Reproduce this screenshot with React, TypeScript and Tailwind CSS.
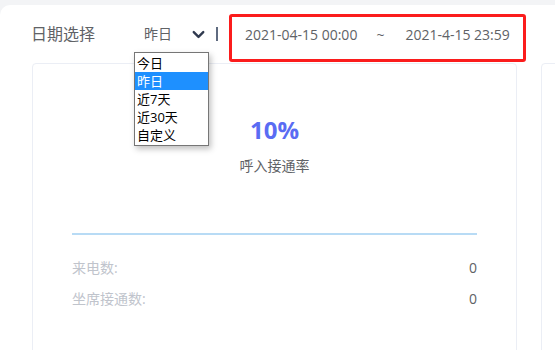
import { ChevronDown } from "lucide-react";

const font = { fontFamily: '"Open Sans", "Noto Sans CJK SC", sans-serif' };

const options = ["今日", "昨日", "近7天", "近30天", "自定义"];

const StatCard = () => (
  <div className="w-[485px] h-[320px] shrink-0 border border-[#ebeef5] rounded-[4px] bg-white px-[39px] pt-[50px]">
    <div className="text-center text-[24px] leading-[32px] font-bold text-[#5a6cf3]">10%</div>
    <div className="mt-[10px] text-center text-[14px] leading-[20px] text-[#606266]">呼入接通率</div>
    <div className="mt-[57px] h-[2px] bg-[#b8dbf5]" />
    <div className="mt-[17px]">
      <div className="flex items-center justify-between h-[31px] text-[14px]">
        <span className="text-[#c0c4cc]">来电数:</span>
        <span className="text-[#606266]">0</span>
      </div>
      <div className="flex items-center justify-between h-[31px] text-[14px]">
        <span className="text-[#c0c4cc]">坐席接通数:</span>
        <span className="text-[#606266]">0</span>
      </div>
    </div>
  </div>
);

export default function App() {
  return (
    <div className="w-[555px] h-[350px] overflow-hidden bg-[#f3f4f6] pt-[5px]" style={font}>
      <div className="relative h-full bg-white rounded-tl-[10px]">
        {/* Header */}
        <div className="flex items-start pt-[9px] pl-[31px]">
          <span className="mt-[8px] text-[16px] leading-[24px] text-[#606266] w-[113px]">日期选择</span>
          <div className="mt-[10px] flex items-center h-[20px]">
            <span className="text-[14px] leading-[20px] text-[#606266] w-[45px]">昨日</span>
            <ChevronDown className="w-[19px] h-[19px] text-[#303a4f]" strokeWidth={3} />
          </div>
          <span className="mt-[13px] ml-[8px] w-[2px] h-[14px] bg-[#5f6b80]" />
          <div className="ml-[11px] w-[297px] h-[48px] border-[3px] border-[#fb1c1c] rounded-[3px] flex items-start pt-[8px] pl-[13px] text-[14px] leading-[20px] text-[#606266]">
            <span>2021-04-15 00:00</span>
            <span className="ml-[19px]">~</span>
            <span className="ml-[21px]">2021-4-15 23:59</span>
          </div>
        </div>

        {/* Dropdown */}
        <div className="absolute left-[134px] top-[47px] w-[75px] bg-white border border-[#767676] shadow-[2px_3px_6px_rgba(0,0,0,0.25)] py-[1px] text-[13px] text-black z-10">
          {options.map((o) => (
            <div
              key={o}
              className={
                o === "昨日"
                  ? "h-[18px] leading-[18px] pl-[2px] bg-[#1e90ff] text-white"
                  : "h-[18px] leading-[18px] pl-[2px]"
              }
            >
              {o}
            </div>
          ))}
        </div>

        {/* Cards */}
        <div className="flex gap-[24px] pl-[32px] mt-[1px]">
          <StatCard />
          <div className="w-[485px] h-[320px] shrink-0 border border-[#ebeef5] rounded-[4px] bg-white" />
        </div>
      </div>
    </div>
  );
}
